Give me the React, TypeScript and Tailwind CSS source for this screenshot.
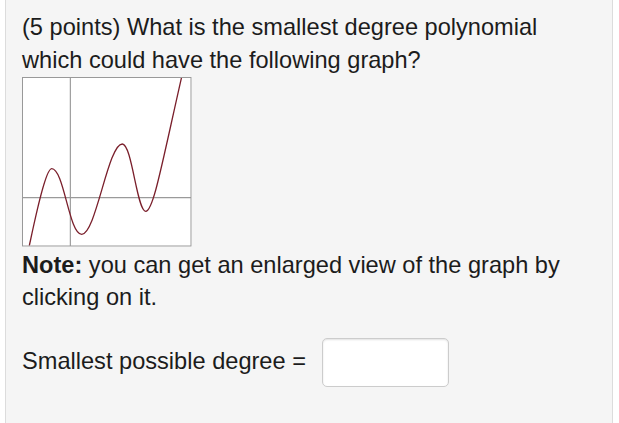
import React from "react";

const curve =
  "M 7.3 168.7 C 11 152, 23 91.7, 29.7 91.7 " +
  "C 42 91.7, 47 157.3, 59.7 157.3 " +
  "C 74 157.3, 86 67, 100.3 67 " +
  "C 110 67, 115 134.3, 123.7 134.3 " +
  "C 132 134.3, 141 80, 166 -27.8";

export default function App() {
  return (
    <div className="w-[619px] h-[423px] bg-white overflow-hidden">
      <div
        className="ml-[5px] w-[608px] h-[423px] bg-[#f5f5f5] border-x border-[#dcdcdc] pl-[16px] pt-[10.5px] text-[23.6px] leading-[32px] text-[#1c1c1c]"
        style={{ fontFamily: '"Liberation Sans", Arial, Helvetica, sans-serif' }}
      >
        <div className="whitespace-nowrap leading-[33px]">(5 points) What is the smallest degree polynomial</div>
        <div className="whitespace-nowrap leading-[33px]">which could have the following graph?</div>
        <svg width="170" height="170" viewBox="0 0 170 170" className="block mt-[0.5px]">
          <rect x="0" y="0" width="170" height="170" fill="#ffffff" />
          <clipPath id="c">
            <rect x="0" y="0" width="169" height="169" />
          </clipPath>
          <line x1="48.3" y1="0" x2="48.3" y2="169" stroke="#8a8a8a" strokeWidth="1" />
          <line x1="0" y1="120.7" x2="169" y2="120.7" stroke="#9a9a9a" strokeWidth="1.2" />
          <g clipPath="url(#c)">
            <path d={curve} fill="none" stroke="#7a1f2b" strokeWidth="1.3" />
          </g>
          <rect x="0.5" y="0.5" width="168.5" height="168.5" fill="none" stroke="#999999" strokeWidth="1" />
        </svg>
        <div className="mt-[2px] whitespace-nowrap">
          <span className="font-bold">Note:</span> you can get an enlarged view of the graph by
        </div>
        <div>clicking on it.</div>
        <div className="flex items-start mt-[25px]">
          <span className="mt-[7px] whitespace-nowrap">Smallest possible degree =</span>
          <div className="ml-[16px] w-[127px] h-[49px] bg-white border border-[#cccccc] rounded-[5px] shadow-[inset_0_1px_2px_rgba(0,0,0,0.12)]" />
        </div>
      </div>
    </div>
  );
}
